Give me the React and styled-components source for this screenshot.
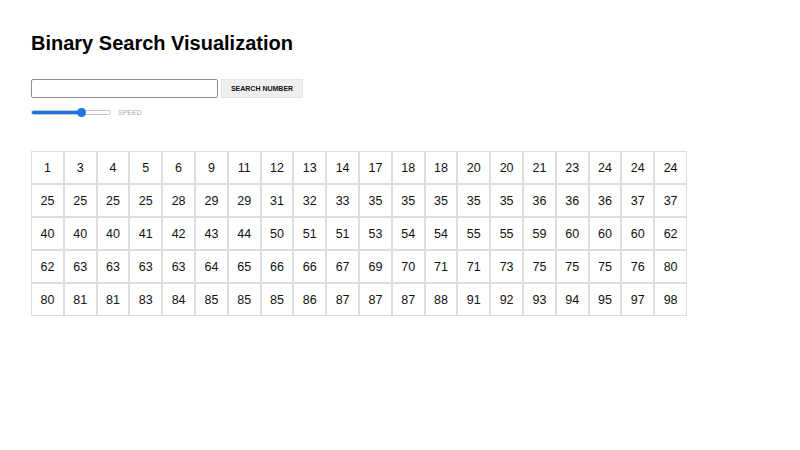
import React, { useState } from "react";
import styled, { createGlobalStyle } from "styled-components";

const numbers = [
  1, 3, 4, 5, 6, 9, 11, 12, 13, 14, 17, 18, 18, 20, 20, 21, 23, 24, 24, 24,
  25, 25, 25, 25, 28, 29, 29, 31, 32, 33, 35, 35, 35, 35, 35, 36, 36, 36, 37, 37,
  40, 40, 40, 41, 42, 43, 44, 50, 51, 51, 53, 54, 54, 55, 55, 59, 60, 60, 60, 62,
  62, 63, 63, 63, 63, 64, 65, 66, 66, 67, 69, 70, 71, 71, 73, 75, 75, 75, 76, 80,
  80, 81, 81, 83, 84, 85, 85, 85, 86, 87, 87, 87, 88, 91, 92, 93, 94, 95, 97, 98,
];

const GlobalStyle = createGlobalStyle`
  body {
    margin: 0;
    background: #fff;
    font-family: "Liberation Sans", Arial, sans-serif;
    color: #000;
  }
`;

const App = () => {
  const [value, setValue] = useState("");
  const [speed, setSpeed] = useState(65);

  return (
    <>
      <GlobalStyle />
      <StPage>
        <StTitle>Binary Search Visualization</StTitle>
        <StSearchRow>
          <StInput
            type="text"
            value={value}
            onChange={(e) => setValue(e.target.value)}
          />
          <StButton>SEARCH NUMBER</StButton>
        </StSearchRow>
        <StSpeedRow>
          <StSlider
            type="range"
            min="0"
            max="100"
            value={speed}
            onChange={(e) => setSpeed(e.target.value)}
            style={{
              background: `linear-gradient(to right, #1a73e8 ${speed}%, #fff ${speed}%)`,
            }}
          />
          <StSpeedLabel>SPEED</StSpeedLabel>
        </StSpeedRow>
        <StGrid>
          {numbers.map((n, i) => (
            <StCell key={i}>{n}</StCell>
          ))}
        </StGrid>
      </StPage>
    </>
  );
};

export default App;

const StPage = styled.div`
  padding: 31px 31px;
`;

const StTitle = styled.h1`
  margin: 0;
  font-size: 20px;
  font-weight: bold;
  line-height: 24px;
`;

const StSearchRow = styled.div`
  display: flex;
  align-items: center;
  gap: 3px;
  margin-top: 24px;
`;

const StInput = styled.input`
  box-sizing: border-box;
  width: 187px;
  height: 19px;
  border: 1px solid #8f8f8f;
  border-radius: 2px;
  outline: none;
  padding: 0 4px;
`;

const StButton = styled.button`
  box-sizing: border-box;
  width: 82px;
  height: 19px;
  border: 1px solid #e4e4e4;
  background: #efefef;
  font-family: "Liberation Sans", Arial, sans-serif;
  font-size: 7px;
  font-weight: bold;
  color: #111;
  padding: 0;
`;

const StSpeedRow = styled.div`
  display: flex;
  align-items: center;
  gap: 7px;
  margin-top: 11px;
`;

const StSlider = styled.input`
  -webkit-appearance: none;
  appearance: none;
  box-sizing: border-box;
  width: 80px;
  height: 5px;
  margin: 0;
  border: 1px solid #c4c4c4;
  border-radius: 3px;
  outline: none;

  &::-webkit-slider-thumb {
    -webkit-appearance: none;
    width: 9px;
    height: 9px;
    border-radius: 50%;
    background: #1a73e8;
    border: none;
  }
`;

const StSpeedLabel = styled.span`
  font-size: 7px;
  color: #aaa;
`;

const StGrid = styled.div`
  display: grid;
  grid-template-columns: repeat(20, 1fr);
  width: 656px;
  margin-top: 35px;
`;

const StCell = styled.div`
  box-sizing: border-box;
  height: 33px;
  border: 1px solid #dcdcdc;
  display: flex;
  align-items: center;
  justify-content: center;
  font-size: 12.5px;
  color: #111;
`;
